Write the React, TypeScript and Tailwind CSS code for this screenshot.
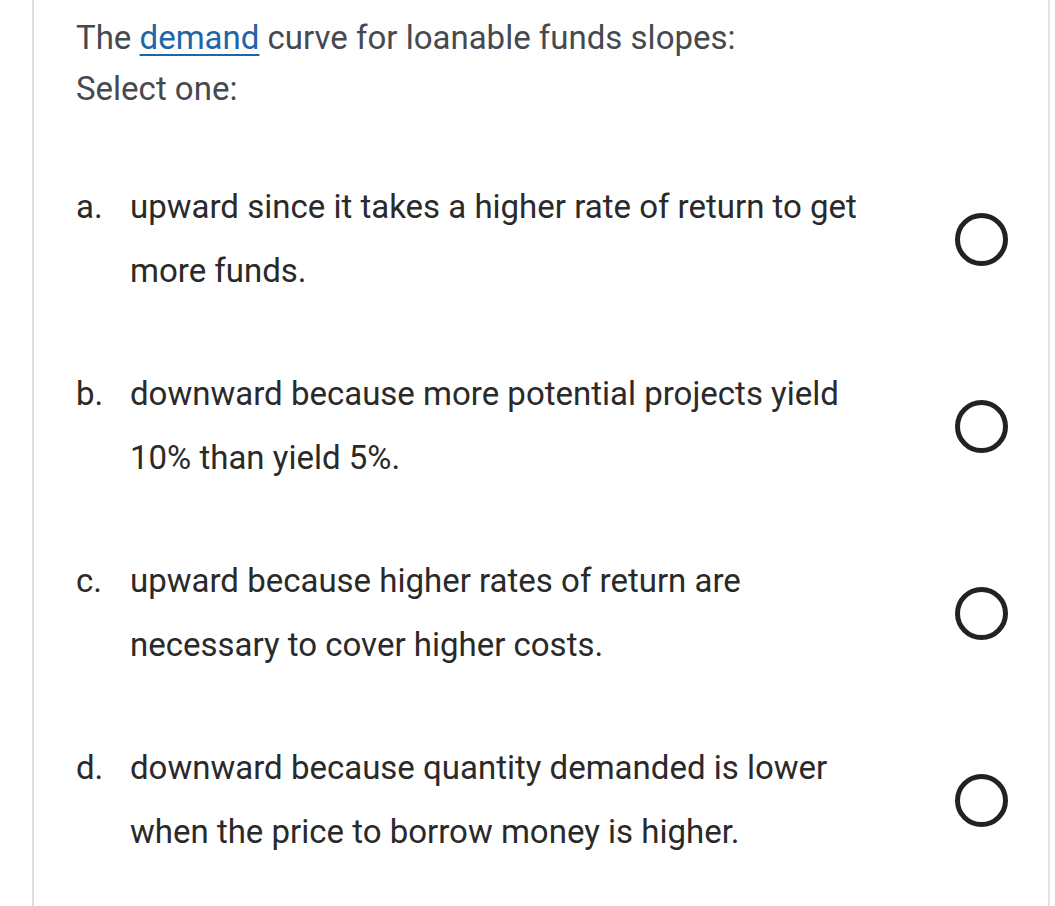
import React from "react";

const options = [
  { letter: "a.", lines: ["upward since it takes a higher rate of return to get", "more funds."] },
  { letter: "b.", lines: ["downward because more potential projects yield", "10% than yield 5%."] },
  { letter: "c.", lines: ["upward because higher rates of return are", "necessary to cover higher costs."] },
  { letter: "d.", lines: ["downward because quantity demanded is lower", "when the price to borrow money is higher."] },
];

export default function App() {
  return (
    <div className="w-[1055px] h-[906px] bg-white overflow-hidden" style={{ fontFamily: "Roboto, 'Noto Sans', sans-serif" }}>
      <div className="ml-[32px] w-[1018px] h-full border-l-2 border-r-2 border-l-[#dedde6] border-r-[#e2e2e2] pl-[42px]">
        <div className="pt-[12px] text-[33px] leading-[51px] text-[#464a4f]">
          <p>
            The{" "}
            <a className="text-[#1f66a6] underline decoration-2 underline-offset-[5px]">demand</a>{" "}
            curve for loanable funds slopes:
          </p>
          <p>Select one:</p>
        </div>
        <div className="mt-[61px] flex flex-col gap-[59px]">
          {options.map((o) => (
            <div key={o.letter} className="flex items-center">
              <div className="flex text-[33px] leading-[64px] text-[#2a2a2a] flex-1">
                <div className="w-[54px] shrink-0">{o.letter}</div>
                <div>
                  {o.lines.map((l) => (
                    <div key={l}>{l}</div>
                  ))}
                </div>
              </div>
              <div className="w-[53px] h-[53px] rounded-full border-[5px] border-[#222222] mr-[40px] shrink-0" />
            </div>
          ))}
        </div>
      </div>
    </div>
  );
}
